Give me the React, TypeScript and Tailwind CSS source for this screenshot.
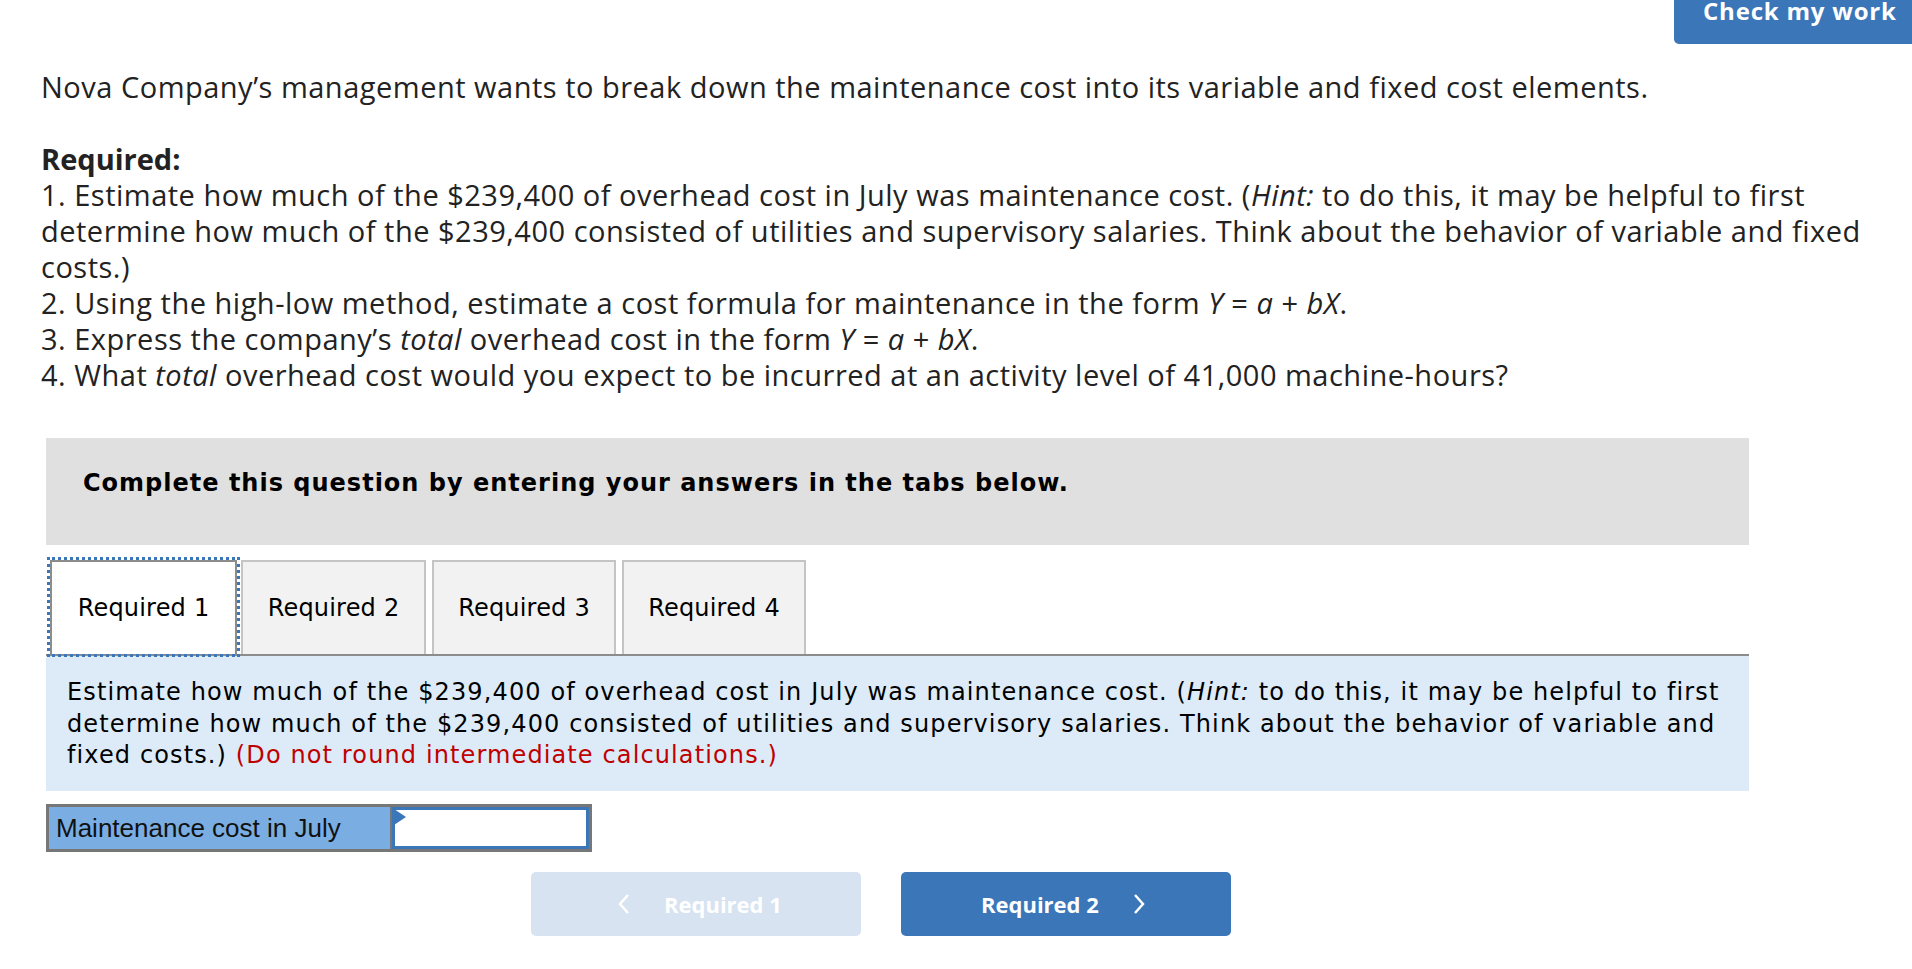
import React from "react";

const main = "font-['Open_Sans',sans-serif]";
const dv = "font-['DejaVu_Sans',sans-serif]";

function I({ children }: { children: React.ReactNode }) {
  return <i>{children}</i>;
}

function Formula() {
  return (
    <span>
      <I>Y</I> = <I>a</I> + <I>bX</I>.
    </span>
  );
}

export default function App() {
  return (
    <div className="w-[1912px] h-[969px] bg-white overflow-hidden text-[#222]">
      <div className="flex justify-end h-[44px]">
        <div className={`w-[238px] h-[48px] shrink-0 bg-[#3a76b8] rounded-bl-[5px] text-white font-bold text-[24px] leading-[30px] tracking-[0.8px] pl-[29px] -mt-[4px] ${main}`}>
          Check my work
        </div>
      </div>

      <div className={`pl-[41px] pr-[10px] text-[29px] leading-[36px] tracking-[0.5px] mt-[25px] whitespace-nowrap ${main}`}>
        <p>Nova Company’s management wants to break down the maintenance cost into its variable and fixed cost elements.</p>
        <p className="mt-[36px] font-bold tracking-[0px]">Required:</p>
        <p>
          1. Estimate how much of the $239,400 of overhead cost in July was maintenance cost. (<I>Hint:</I> to do this, it may be helpful to first
          <br />
          determine how much of the $239,400 consisted of utilities and supervisory salaries. Think about the behavior of variable and fixed
          <br />
          costs.)
        </p>
        <p>
          2. Using the high-low method, estimate a cost formula for maintenance in the form <Formula />
        </p>
        <p>
          3. Express the company’s <I>total</I> overhead cost in the form <Formula />
        </p>
        <p>
          4. What <I>total</I> overhead cost would you expect to be incurred at an activity level of 41,000 machine-hours?
        </p>
      </div>

      <div className={`ml-[46px] w-[1703px] mt-[45px] ${dv}`}>
        <div className="h-[107px] bg-[#e0e0e0] pl-[37px] pt-[31px]">
          <p className="font-bold text-[24px] leading-[28px] tracking-[1px] text-black whitespace-nowrap">
            Complete this question by entering your answers in the tabs below.
          </p>
        </div>

        <div className="flex items-end mt-[15px] border-b-2 border-[#8c8c8c] text-[24px] tracking-[0.2px] text-black">
          <div className="ml-[4px] w-[187px] h-[94px] bg-white border-2 border-b-0 border-[#8c8c8c] outline-[3px] outline-dotted outline-[#3a76b8] flex items-center justify-center">
            Required 1
          </div>
          <div className="ml-[4px] w-[185px] h-[94px] bg-[#f2f2f2] border-2 border-b-0 border-[#c4c4c4] flex items-center justify-center">
            Required 2
          </div>
          <div className="ml-[6px] w-[184px] h-[94px] bg-[#f2f2f2] border-2 border-b-0 border-[#c4c4c4] flex items-center justify-center">
            Required 3
          </div>
          <div className="ml-[6px] w-[184px] h-[94px] bg-[#f2f2f2] border-2 border-b-0 border-[#c4c4c4] flex items-center justify-center">
            Required 4
          </div>
        </div>

        <div className="bg-[#dcebf7] h-[135px] pl-[21px] pt-[21px] text-[24px] leading-[31.5px] tracking-[1.12px] text-black whitespace-nowrap">
          <p>
            Estimate how much of the $239,400 of overhead cost in July was maintenance cost. (<I>Hint:</I> to do this, it may be helpful to first
            <br />
            determine how much of the $239,400 consisted of utilities and supervisory salaries. Think about the behavior of variable and
            <br />
            fixed costs.) <span className="text-[#c00000]">(Do not round intermediate calculations.)</span>
          </p>
        </div>

        <div className="mt-[13px] flex w-[546px] h-[48px] border-[3px] border-[#777777] font-['Liberation_Sans',sans-serif]">
          <div className="w-[343px] bg-[#7aaee3] border-r-2 border-[#777777] flex items-center pl-[7px] text-[26px] text-[#111] whitespace-nowrap">
            Maintenance cost in July
          </div>
          <div className="relative flex-1 bg-white border-[3px] border-[#3a76b8]">
            <svg className="absolute -left-[1px] -top-[1px]" width="12" height="16" viewBox="0 0 12 16">
              <polygon points="0,0 12,8 0,16" fill="#3a76b8" />
            </svg>
          </div>
        </div>
      </div>

      <div className={`flex ml-[531px] mt-[20px] gap-[40px] ${main}`}>
        <div className="w-[330px] h-[64px] rounded-[5px] bg-[#d7e3f1] flex items-center text-white font-bold text-[22px] pl-[86px]">
          <svg width="14" height="24" viewBox="0 0 14 24">
            <polyline points="11,3 3,12 11,21" fill="none" stroke="white" strokeWidth="2.5" />
          </svg>
          <span className="ml-[33px]">Required 1</span>
        </div>
        <div className="w-[330px] h-[64px] rounded-[5px] bg-[#3a76b8] flex items-center text-white font-bold text-[22px] pl-[80px]">
          <span>Required 2</span>
          <svg width="14" height="24" viewBox="0 0 14 24" className="ml-[33px]">
            <polyline points="3,3 11,12 3,21" fill="none" stroke="white" strokeWidth="2.5" />
          </svg>
        </div>
      </div>
    </div>
  );
}
